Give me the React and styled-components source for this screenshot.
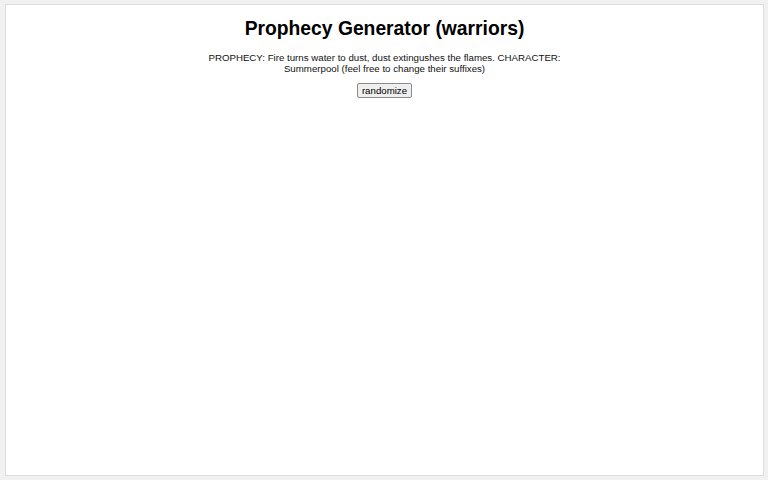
import React, { useState } from "react";
import styled, { createGlobalStyle } from "styled-components";

const GlobalStyle = createGlobalStyle`
  html, body {
    margin: 0;
    background: #f1f1f1;
    font-family: "Liberation Sans", Arial, sans-serif;
  }
`;

const Page = styled.div`
  padding: 4px 4px 4px 5px;
  height: 480px;
  box-sizing: border-box;
`;

const Panel = styled.main`
  height: 100%;
  box-sizing: border-box;
  background: #fff;
  border: 1px solid #dcdcdc;
  display: flex;
  flex-direction: column;
  align-items: center;
  padding-top: 13px;
`;

const Title = styled.h1`
  margin: 0;
  font-size: 19.3px;
  font-weight: bold;
  color: #000;
`;

const Prophecy = styled.p`
  margin: 12px 0 0;
  max-width: 356px;
  text-align: center;
  font-size: 9.7px;
  line-height: 11px;
  color: #111;
`;

const Button = styled.button`
  margin-top: 9px;
  font-family: "Liberation Sans", Arial, sans-serif;
  font-size: 9.7px;
  padding: 1px 4px;
  background: #efefef;
  border: 1px solid #8a8a8a;
  border-radius: 2px;
  color: #000;
`;

const prophecies = [
  "Fire turns water to dust, dust extingushes the flames.",
];
const names = ["Summerpool"];

export default function App() {
  const [i] = useState(0);
  return (
    <>
      <GlobalStyle />
      <Page>
        <Panel>
          <Title>Prophecy Generator (warriors)</Title>
          <Prophecy>
            PROPHECY: {prophecies[i]} CHARACTER: {names[i]} (feel free to change their suffixes)
          </Prophecy>
          <Button>randomize</Button>
        </Panel>
      </Page>
    </>
  );
}
